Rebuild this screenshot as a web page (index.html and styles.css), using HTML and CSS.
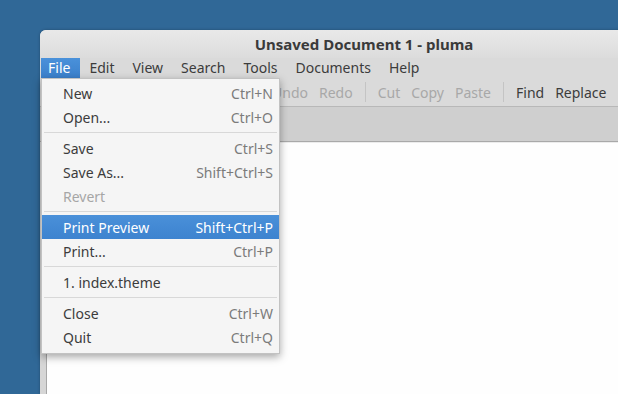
FILE: index.html
```html
<!DOCTYPE html>
<html lang="en">
<head>
  <meta charset="UTF-8" />
  <title>Unsaved Document 1 - pluma</title>
  <link rel="stylesheet" href="styles.css">
</head>
<body>

  <div class="window">
    <div class="titlebar">Unsaved Document 1 - pluma</div>

    <div class="menubar">
      <span class="menu-item open">File</span>
      <span class="menu-item">Edit</span>
      <span class="menu-item">View</span>
      <span class="menu-item">Search</span>
      <span class="menu-item">Tools</span>
      <span class="menu-item">Documents</span>
      <span class="menu-item">Help</span>
    </div>

    <div class="toolbar">
      <span class="tool off">Undo</span>
      <span class="tool off">Redo</span>
      <span class="tsep"></span>
      <span class="tool off">Cut</span>
      <span class="tool off">Copy</span>
      <span class="tool off">Paste</span>
      <span class="tsep"></span>
      <span class="tool">Find</span>
      <span class="tool">Replace</span>
    </div>

    <div class="tabbar"></div>
    <div class="editor"></div>

    <!-- File menu dropdown -->
    <div class="dropdown">
      <div class="row"><span>New</span><span class="key">Ctrl+N</span></div>
      <div class="row"><span>Open...</span><span class="key">Ctrl+O</span></div>
      <div class="sep"></div>
      <div class="row"><span>Save</span><span class="key">Ctrl+S</span></div>
      <div class="row"><span>Save As...</span><span class="key">Shift+Ctrl+S</span></div>
      <div class="row disabled"><span>Revert</span></div>
      <div class="sep"></div>
      <div class="row active"><span>Print Preview</span><span class="key">Shift+Ctrl+P</span></div>
      <div class="row"><span>Print...</span><span class="key">Ctrl+P</span></div>
      <div class="sep"></div>
      <div class="row"><span>1. index.theme</span></div>
      <div class="sep"></div>
      <div class="row"><span>Close</span><span class="key">Ctrl+W</span></div>
      <div class="row"><span>Quit</span><span class="key">Ctrl+Q</span></div>
    </div>
  </div>

</body>
</html>
```

FILE: styles.css
```css
* {
  margin: 0;
  padding: 0;
  box-sizing: border-box;
}

html, body {
  height: 100%;
  overflow: hidden;
}

body {
  background-color: #306897;
  font-family: 'Noto Sans', 'Open Sans', sans-serif;
  font-size: 14px;
  color: #3c3c3c;
  padding: 30px 0 0 40px;
}

.window {
  position: relative;
  width: 600px;
  height: 364px;
  display: flex;
  flex-direction: column;
  background-color: #dadada;
  border-radius: 6px 6px 0 0;
  box-shadow: 0 0 3px rgba(0, 0, 0, 0.3);
}

.titlebar {
  height: 28px;
  display: flex;
  align-items: center;
  justify-content: center;
  padding-left: 48px;
  font-weight: bold;
  font-size: 15px;
  color: #3a3a3a;
  background: linear-gradient(#e9e9e9, #dcdcdc);
  border-radius: 6px 6px 0 0;
}

.menubar {
  height: 20px;
  display: flex;
  align-items: center;
  padding-left: 1px;
}

.menu-item {
  height: 20px;
  line-height: 20px;
  padding: 0 9px;
}

.menu-item.open {
  background: linear-gradient(#4a91da, #3b80cb);
  color: #fff;
  padding: 0 10px 0 7px;
}

.toolbar {
  height: 29px;
  display: flex;
  align-items: center;
  padding-left: 232px;
  border-bottom: 1px solid #b8b8b8;
}

.tool {
  margin-right: 11px;
}

.tool.off {
  color: #a8a8a8;
}

.tsep {
  width: 1px;
  height: 20px;
  background-color: #c4c4c4;
  margin: 0 12px 0 1px;
}

.tabbar {
  height: 35px;
  background-color: #cfcfcf;
  border-bottom: 1px solid #a9a9a9;
}

.editor {
  flex: 1;
  background-color: #fefefe;
  border-left: 6px solid #d6d6d6;
  border-top: 1px solid #ececec;
  box-shadow: inset 1px 0 0 #a8a8a8;
}

/* dropdown lies over the window content */
.dropdown {
  position: absolute;
  left: 1px;
  top: 48px;
  width: 239px;
  padding: 2px 0 4px;
  background-color: #f5f5f5;
  border: 1px solid #c2c2c2;
  box-shadow: 0 3px 8px rgba(0, 0, 0, 0.35);
  z-index: 5;
}

.row {
  height: 24px;
  display: flex;
  align-items: center;
  justify-content: space-between;
  padding: 0 6px 0 21px;
}

.key {
  color: #7b7b7b;
}

.row.disabled {
  color: #a6a6a6;
}

.row.active {
  background: linear-gradient(#4a90d9, #3d83cf);
  color: #fff;
}

.row.active .key {
  color: #fff;
}

.sep {
  height: 1px;
  margin: 3px 2px;
  background-color: #d8d8d8;
}
```
